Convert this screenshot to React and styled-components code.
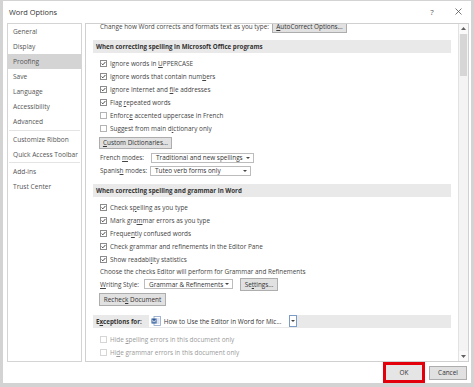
import React from 'react';
import styled, { createGlobalStyle } from 'styled-components';

const Global = createGlobalStyle`
  html, body { margin: 0; padding: 0; background: #d3d3d3; }
  body { font-family: "Open Sans", "Noto Sans", sans-serif; color: #444; }
  * { box-sizing: border-box; }
`;

const Screen = styled.div`
  width: 474px;
  height: 387px;
  padding: 1px 3px 4px 3px;
  background: #d3d3d3;
  overflow: hidden;
`;

const Dialog = styled.div`
  height: 100%;
  background: #fff;
  display: flex;
  flex-direction: column;
`;

const TitleBar = styled.div`
  height: 22px;
  display: flex;
  align-items: center;
  padding: 0 8px 0 6px;
  font-size: 7.4px;
  color: #333;
`;

const Title = styled.div`
  flex: 1;
`;

const TitleIcon = styled.div`
  width: 10px;
  text-align: center;
  margin-left: ${p => p.gap}px;
  color: #555;
  font-size: 8px;
  display: flex;
  justify-content: center;
`;

const Body = styled.div`
  height: 342px;
  display: flex;
  gap: 3px;
  padding: 0 2px 0 4px;
`;

const Nav = styled.div`
  width: 75px;
  border: 1px solid #d4d4d4;
  background: #fff;
`;

const NavItem = styled.div`
  height: 15px;
  line-height: 15px;
  padding-left: 5px;
  font-size: 6.6px;
  color: #555;
  background: ${p => (p.active ? '#d4d4d4' : 'transparent')};
`;

const NavSep = styled.div`
  height: ${p => p.h}px;
  display: flex;
  align-items: center;
  padding: 0 1px;
  &::after {
    content: '';
    flex: 1;
    height: 1px;
    background: #e4e4e4;
  }
`;

const Panel = styled.div`
  flex: 1;
  border: 1px solid #d0d0d0;
  display: flex;
  overflow: hidden;
`;

const Main = styled.div`
  flex: 1;
  overflow: hidden;
  padding: 0 7px;
  font-size: 6.4px;
  color: #444;
`;

const Scroll = styled.div`
  width: 10px;
  background: #f4f4f4;
  border-left: 1px solid #e2e2e2;
  display: flex;
  flex-direction: column;
`;

const ScrollArrow = styled.div`
  height: 10px;
  display: flex;
  align-items: center;
  justify-content: center;
  background: #fafafa;
`;

const ScrollThumb = styled.div`
  height: 42px;
  margin: 0 1px;
  background: #d6d6d6;
`;

const ScrollTrack = styled.div`
  flex: 1;
`;

const Row = styled.div`
  height: ${p => p.h || 13}px;
  margin-top: ${p => p.mt || 0}px;
  padding-left: ${p => (p.indent === undefined ? 7 : p.indent)}px;
  display: flex;
  align-items: center;
  white-space: nowrap;
  color: ${p => (p.disabled ? '#9a9a9a' : '#444')};
`;

const Band = styled.div`
  height: 13px;
  margin-top: ${p => p.mt}px;
  background: #e9e9e9;
  padding-left: 3px;
  display: flex;
  align-items: center;
  font-weight: 700;
  font-size: 6.2px;
  color: #333;
  white-space: nowrap;
`;

const Box = styled.span`
  width: 7px;
  height: 7px;
  border: 1px solid ${p => (p.disabled ? '#d6d6d6' : p.checked ? '#8c8c8c' : '#b4b4b4')};
  background: #fff;
  margin-right: 3px;
  display: inline-flex;
  align-items: center;
  justify-content: center;
`;

const Button = styled.div`
  height: ${p => p.h || 13}px;
  width: ${p => p.w}px;
  margin-left: ${p => p.ml || 0}px;
  background: #e1e1e1;
  border: 1px solid #adadad;
  display: flex;
  align-items: center;
  justify-content: center;
  color: #333;
  white-space: nowrap;
`;

const Label = styled.span`
  width: ${p => p.w}px;
  flex-shrink: 0;
`;

const Select = styled.div`
  width: ${p => p.w}px;
  height: 10px;
  border: 1px solid #bcbcbc;
  background: #fff;
  display: flex;
  align-items: center;
  padding: 0 3px 0 4px;
  color: #333;
  span { flex: 1; }
`;

const Caret = styled.span`
  flex: none !important;
  width: 0;
  height: 0;
  border-left: 2px solid transparent;
  border-right: 2px solid transparent;
  border-top: 2px solid #444;
`;

const ExSelect = styled.div`
  height: 12px;
  margin-left: 7px;
  display: flex;
  align-items: stretch;
  font-weight: 400;
  font-size: 6.4px;
  color: #333;
`;

const ExField = styled.div`
  width: 140px;
  background: #fff;
  display: flex;
  align-items: center;
  gap: 3px;
  padding-left: 2px;
  overflow: hidden;
`;

const ExArrow = styled.div`
  width: 8px;
  border: 1px solid #7a9cc6;
  background: #fff;
  display: flex;
  align-items: center;
  justify-content: center;
`;

const Footer = styled.div`
  flex: 1;
  display: flex;
  justify-content: flex-end;
  align-items: center;
  gap: 4px;
  padding-right: 4px;
  font-size: 6.4px;
`;

const OkFrame = styled.div`
  width: 42px;
  height: 21px;
  border: 3px solid #e3000b;
  background: #e5e5e5;
  display: flex;
  align-items: center;
  justify-content: center;
  color: #333;
`;

const Check = () => (
  <svg width="5" height="5" viewBox="0 0 5 5">
    <path d="M0.6 2.6 L1.9 3.8 L4.4 1" fill="none" stroke="#333" strokeWidth="0.9" />
  </svg>
);

const CheckRow = ({ checked, disabled, children, mt }) => (
  <Row mt={mt} disabled={disabled}>
    <Box checked={checked} disabled={disabled}>{checked && <Check />}</Box>
    <span>{children}</span>
  </Row>
);

const DocIcon = () => (
  <svg width="10" height="10" viewBox="0 0 10 10">
    <rect x="3" y="0.5" width="6.5" height="9" fill="#fff" stroke="#8aa4c8" strokeWidth="0.8" />
    <line x1="5" y1="3" x2="8.5" y2="3" stroke="#9bb3d6" strokeWidth="0.7" />
    <line x1="5" y1="5" x2="8.5" y2="5" stroke="#9bb3d6" strokeWidth="0.7" />
    <line x1="5" y1="7" x2="8.5" y2="7" stroke="#9bb3d6" strokeWidth="0.7" />
    <rect x="0.5" y="2.5" width="5" height="5" fill="#2b5797" />
    <path d="M1.3 3.6 L2 6.4 L3 4.6 L4 6.4 L4.7 3.6" fill="none" stroke="#fff" strokeWidth="0.6" />
  </svg>
);

const navTop = ['General', 'Display', 'Proofing', 'Save', 'Language', 'Accessibility', 'Advanced'];

export default function App() {
  return (
    <>
      <Global />
      <Screen>
        <Dialog>
          <TitleBar>
            <Title>Word Options</Title>
            <TitleIcon>?</TitleIcon>
            <TitleIcon gap={16}>
              <svg width="7" height="7" viewBox="0 0 7 7">
                <path d="M0.5 0.5 L6.5 6.5 M6.5 0.5 L0.5 6.5" stroke="#555" strokeWidth="0.8" />
              </svg>
            </TitleIcon>
          </TitleBar>

          <Body>
            <Nav>
              {navTop.map(n => (
                <NavItem key={n} active={n === 'Proofing'}>{n}</NavItem>
              ))}
              <NavSep h={3} />
              <NavItem>Customize Ribbon</NavItem>
              <NavItem>Quick Access Toolbar</NavItem>
              <NavSep h={2} />
              <NavItem>Add-ins</NavItem>
              <NavItem>Trust Center</NavItem>
            </Nav>

            <Panel>
              <Main>
                <Row h={14} mt={-4}>
                  <Label w={172}>Change how Word corrects and formats text as you type:</Label>
                  <Button w={75}><span><u>A</u>utoCorrect Options...</span></Button>
                </Row>

                <Band mt={6}>When correcting spelling in Microsoft Office programs</Band>
                <CheckRow checked mt={4}>Ignore words in <u>U</u>PPERCASE</CheckRow>
                <CheckRow checked>Ignore words that contain num<u>b</u>ers</CheckRow>
                <CheckRow checked>Ignore Internet and <u>f</u>ile addresses</CheckRow>
                <CheckRow checked>Flag <u>r</u>epeated words</CheckRow>
                <CheckRow>Enforc<u>e</u> accented uppercase in French</CheckRow>
                <CheckRow>Suggest from main d<u>i</u>ctionary only</CheckRow>

                <Row h={12} mt={2} indent={6}>
                  <Button w={73} h={12}><span><u>C</u>ustom Dictionaries...</span></Button>
                </Row>
                <Row h={10} mt={4}>
                  <Label w={51}>French <u>m</u>odes:</Label>
                  <Select w={103}><span>Traditional and new spellings</span><Caret /></Select>
                </Row>
                <Row h={10} mt={3}>
                  <Label w={50}>Spanis<u>h</u> modes:</Label>
                  <Select w={101}><span>Tuteo verb forms only</span><Caret /></Select>
                </Row>

                <Band mt={8}>When correcting spelling and grammar in Word</Band>
                <CheckRow checked mt={4}>Check s<u>p</u>elling as you type</CheckRow>
                <CheckRow checked>Mark gra<u>m</u>mar errors as you type</CheckRow>
                <CheckRow checked>Freque<u>n</u>tly confused words</CheckRow>
                <CheckRow checked>Check grammar and refinements in the Editor Pane</CheckRow>
                <CheckRow checked>Show readabi<u>l</u>ity statistics</CheckRow>
                <Row h={12}>Choose the checks Editor will perform for Grammar and Refinements</Row>
                <Row h={13}>
                  <Label w={44}><u>W</u>riting Style:</Label>
                  <Select w={89}><span>Grammar &amp; Refinements</span><Caret /></Select>
                  <Button w={38} ml={7}><span>Se<u>t</u>tings...</span></Button>
                </Row>
                <Row h={13} mt={2} indent={6}>
                  <Button w={67}><span>Rechec<u>k</u> Document</span></Button>
                </Row>

                <Band mt={9}>
                  <span>E<u>x</u>ceptions for:</span>
                  <ExSelect>
                    <ExField>
                      <DocIcon />
                      <span>How to Use the Editor in Word for Mic...</span>
                    </ExField>
                    <ExArrow><Caret /></ExArrow>
                  </ExSelect>
                </Band>
                <CheckRow disabled mt={5}>Hide <u>s</u>pelling errors in this document only</CheckRow>
                <CheckRow disabled>Hi<u>d</u>e grammar errors in this document only</CheckRow>
              </Main>
              <Scroll>
                <ScrollArrow>
                  <svg width="5" height="3" viewBox="0 0 5 3"><path d="M0 3 L2.5 0 L5 3 Z" fill="#606060" /></svg>
                </ScrollArrow>
                <ScrollThumb />
                <ScrollTrack />
                <ScrollArrow>
                  <svg width="5" height="3" viewBox="0 0 5 3"><path d="M0 0 L2.5 3 L5 0 Z" fill="#606060" /></svg>
                </ScrollArrow>
              </Scroll>
            </Panel>
          </Body>

          <Footer>
            <OkFrame>OK</OkFrame>
            <Button w={38} h={14}>Cancel</Button>
          </Footer>
        </Dialog>
      </Screen>
    </>
  );
}
